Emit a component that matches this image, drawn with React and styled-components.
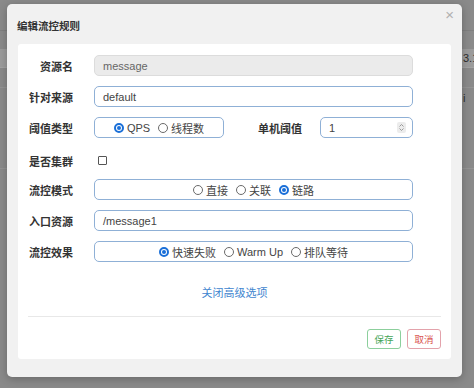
import React from "react";
import styled, { createGlobalStyle } from "styled-components";

const GlobalStyle = createGlobalStyle`
  html, body {
    margin: 0;
    padding: 0;
    background: #8a8a8a;
    font-family: "Liberation Sans", "Noto Sans CJK SC", sans-serif;
  }
`;

const Screen = styled.div`
  position: relative;
  width: 474px;
  height: 388px;
  overflow: hidden;
  background: #8a8a8a;
`;

const Behind = styled.div`
  display: flex;
  flex-direction: column;
`;

const BehindRow = styled.div`
  height: ${(p) => p.$h}px;
  box-sizing: border-box;
  border-bottom: 1px solid ${(p) => p.$line || "transparent"};
  background: ${(p) => p.$bg || "transparent"};
  padding-left: 463px;
  display: flex;
  align-items: center;
  font-size: 11px;
  color: #2e2e2e;
  white-space: nowrap;
`;

const Modal = styled.div`
  position: absolute;
  left: 7px;
  top: 4px;
  width: 455px;
  height: 373px;
  box-sizing: border-box;
  background: #f1f1f1;
  border-radius: 5px;
  box-shadow: 0 2px 8px rgba(0, 0, 0, 0.25);
  display: flex;
  flex-direction: column;
`;

const Header = styled.div`
  height: 40px;
  padding: 0 10px;
  display: flex;
  align-items: center;
  justify-content: space-between;
`;

const Title = styled.h4`
  margin: 0;
  padding-top: 2px;
  font-size: 10.5px;
  font-weight: bold;
  color: #333;
`;

const Close = styled.span`
  align-self: flex-start;
  margin-top: 3px;
  margin-right: -2px;
  font-size: 15px;
  line-height: 1;
  color: #b0b0b0;
`;

const Panel = styled.div`
  margin: 0 11px;
  height: 315px;
  box-sizing: border-box;
  background: #fff;
  border-radius: 3px;
  padding: 11px 10px 10px 10px;
  display: flex;
  flex-direction: column;
`;

const Form = styled.div`
  display: grid;
  grid-template-columns: 45px 1fr;
  column-gap: 21px;
  row-gap: 10px;
  padding-right: 28px;
`;

const Label = styled.div`
  height: 21px;
  display: flex;
  align-items: center;
  justify-content: flex-end;
  font-size: 11px;
  font-weight: bold;
  color: #333;
  white-space: nowrap;
  padding-top: ${(p) => (p.$shift ? 4 : 0)}px;
  box-sizing: border-box;
`;

const Field = styled.div`
  height: 21px;
  box-sizing: border-box;
  border: 1px solid ${(p) => (p.$disabled ? "#dcdcdc" : "#8fb0d6")};
  background: ${(p) => (p.$disabled ? "#ebebeb" : "#fff")};
  border-radius: 5px;
  padding: 0 8px;
  display: flex;
  align-items: center;
  font-size: 11px;
  color: ${(p) => (p.$disabled ? "#666" : "#444")};
  width: ${(p) => (p.$w ? `${p.$w}px` : "auto")};
  flex: ${(p) => (p.$w ? "none" : "1")};
`;

const Group = styled(Field)`
  justify-content: center;
  gap: 8px;
  padding: 0 6px;
`;

const Option = styled.span`
  display: inline-flex;
  align-items: center;
  gap: 3px;
  font-size: 11px;
  color: #444;
  white-space: nowrap;
`;

const Dot = styled.span`
  width: 10px;
  height: 10px;
  box-sizing: border-box;
  border-radius: 50%;
  border: 1px solid ${(p) => (p.$checked ? "#1a6fd8" : "#6a6a6a")};
  display: inline-flex;
  align-items: center;
  justify-content: center;
  &::after {
    content: "";
    width: 4px;
    height: 4px;
    border-radius: 50%;
    background: ${(p) => (p.$checked ? "#1a6fd8" : "transparent")};
  }
  ${(p) => p.$checked && "border-width: 2px;"}
`;

const Inline = styled.div`
  display: flex;
  align-items: center;
`;

const SideLabel = styled(Label)`
  margin-left: 34px;
`;

const NumberField = styled(Field)`
  margin-left: auto;
  justify-content: space-between;
  padding-right: 6px;
`;

const Spinner = styled.span`
  width: 9px;
  height: 11px;
  border-radius: 2px;
  background: #ececec;
  display: inline-flex;
  align-items: center;
  justify-content: center;
`;

const CheckRow = styled.div`
  height: 21px;
  display: flex;
  align-items: center;
  padding: 4px 0 0 4px;
  box-sizing: border-box;
`;

const Checkbox = styled.span`
  width: 9px;
  height: 9px;
  box-sizing: border-box;
  border: 1px solid #555;
  border-radius: 1px;
`;

const Toggle = styled.div`
  margin-top: 22px;
  text-align: center;
  font-size: 11px;
  color: #3f86cf;
`;

const Divider = styled.div`
  margin-top: 16px;
  border-top: 1px solid #e8e8e8;
`;

const Footer = styled.div`
  margin-top: auto;
  display: flex;
  justify-content: flex-end;
  gap: 6px;
`;

const Button = styled.button`
  width: 34px;
  height: 20px;
  padding: 0;
  box-sizing: border-box;
  background: #fff;
  border-radius: 3px;
  font-family: inherit;
  font-size: 9.5px;
  border: 1px solid ${(p) => (p.$tone === "danger" ? "#e3a2ab" : "#8ccf9c")};
  color: ${(p) => (p.$tone === "danger" ? "#d9534f" : "#45a557")};
`;

const RadioGroup = ({ options, checked, w }) => (
  <Group $w={w}>
    {options.map((o) => (
      <Option key={o}>
        <Dot $checked={o === checked} />
        {o}
      </Option>
    ))}
  </Group>
);

export default function App() {
  return (
    <Screen>
      <GlobalStyle />
      <Behind>
        <BehindRow $h={31} $line="#7f7f7f" />
        <BehindRow $h={18} />
        <BehindRow $h={19} $bg="#9b9b9b" $line="#a3a3a3">
          3.1
        </BehindRow>
        <BehindRow $h={20} $line="#949494" />
        <BehindRow $h={20}>i</BehindRow>
        <BehindRow $h={61} $line="#949494" />
      </Behind>

      <Modal>
        <Header>
          <Title>编辑流控规则</Title>
          <Close>×</Close>
        </Header>
        <Panel>
          <Form>
            <Label>资源名</Label>
            <Field $disabled>message</Field>

            <Label>针对来源</Label>
            <Field>default</Field>

            <Label>阈值类型</Label>
            <Inline>
              <RadioGroup w={130} options={["QPS", "线程数"]} checked="QPS" />
              <SideLabel>单机阈值</SideLabel>
              <NumberField $w={93}>
                1
                <Spinner>
                  <svg width="7" height="9" viewBox="0 0 7 9" fill="none" stroke="#9a9a9a" strokeWidth="1">
                    <path d="M1.5 3.5 L3.5 1.5 L5.5 3.5" />
                    <path d="M1.5 5.5 L3.5 7.5 L5.5 5.5" />
                  </svg>
                </Spinner>
              </NumberField>
            </Inline>

            <Label $shift>是否集群</Label>
            <CheckRow>
              <Checkbox />
            </CheckRow>

            <Label>流控模式</Label>
            <RadioGroup options={["直接", "关联", "链路"]} checked="链路" />

            <Label>入口资源</Label>
            <Field>/message1</Field>

            <Label>流控效果</Label>
            <RadioGroup options={["快速失败", "Warm Up", "排队等待"]} checked="快速失败" />
          </Form>
          <Toggle>关闭高级选项</Toggle>
          <Divider />
          <Footer>
            <Button $tone="success">保存</Button>
            <Button $tone="danger">取消</Button>
          </Footer>
        </Panel>
      </Modal>
    </Screen>
  );
}
